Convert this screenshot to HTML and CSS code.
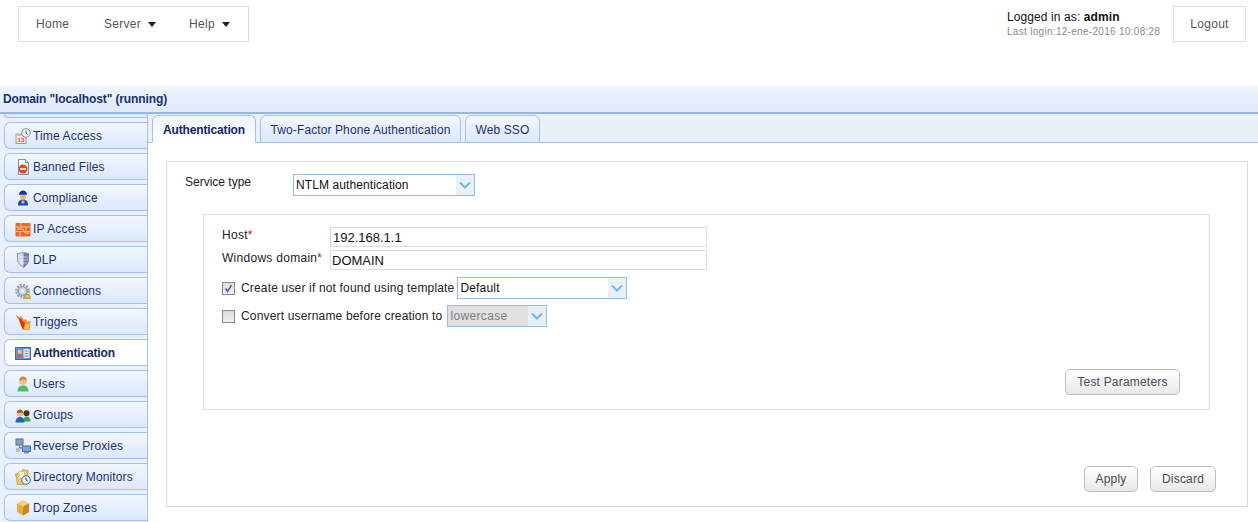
FILE: index.html
```html
<!DOCTYPE html>
<html>
<head>
<meta charset="utf-8">
<title>Domain</title>
<link rel="stylesheet" href="styles.css">
</head>
<body>
<header class="top">
  <nav class="menu">
    <a class="menu-item m-home">Home</a>
    <a class="menu-item m-server">Server<i class="caret"></i></a>
    <a class="menu-item m-help">Help<i class="caret"></i></a>
  </nav>
  <div class="session">
    <div class="who">
      <div class="logged">Logged in as: <b>admin</b></div>
      <div class="last">Last login:12-ene-2016 10:08:28</div>
    </div>
    <a class="logout">Logout</a>
  </div>
</header>
<div class="domain">Domain "localhost" (running)</div>
<div class="main">
  <aside class="side">
    <div class="side-stub"></div>
    <a class="side-item"><svg class="ico" viewBox="0 0 16 16"><rect x="1" y="6" width="10" height="9.500" fill="#f6e9e0" stroke="#a59aa6"/><rect x="1.500" y="6.500" width="9" height="1.500" fill="#d9b7a8"/><text x="2.500" y="14" font-size="6" font-family="Liberation Sans" font-weight="bold" fill="#e8502a">13</text><circle cx="11" cy="5" r="4.300" fill="#e9f0f7" stroke="#8494a8"/><path d="M11 2.800v2.500l1.700 1" fill="none" stroke="#4f627c"/></svg>Time Access</a>
    <a class="side-item"><svg class="ico" viewBox="0 0 16 16"><path d="M3.500 .5h7l3 3v12h-10z" fill="#f7f9fc" stroke="#7d8db0"/><path d="M10.500 .5v3h3" fill="#dfe6f2" stroke="#7d8db0"/><circle cx="8" cy="10" r="4.500" fill="#e8481c"/><rect x="5" y="9.200" width="6" height="1.600" fill="#fff"/></svg>Banned Files</a>
    <a class="side-item"><svg class="ico" viewBox="0 0 16 16"><path d="M3 15.500c0-4.500 2-6 5-6s5 1.500 5 6z" fill="#1b46b8"/><circle cx="8" cy="6.500" r="3" fill="#eeb47c"/><path d="M4 4.800c0-3 2.500-4.300 4-4.300s4 1.300 4 4.300z" fill="#143a9c"/><rect x="6.500" y="10.500" width="3" height="3" fill="#e9c04a"/></svg>Compliance</a>
    <a class="side-item"><svg class="ico" viewBox="0 0 16 16"><rect x=".5" y="2" width="15" height="13.500" rx="1" fill="#ee6428"/><path d="M1 6h14M1 10.500h14M6 2v4M11 6v4.500M5 10.500v5" stroke="#f9c48a" fill="none"/><path d="M2 8h6l2 4h4" stroke="#fbe08a" fill="none"/></svg>IP Access</a>
    <a class="side-item"><svg class="ico" viewBox="0 0 16 16"><path d="M2.500 1.500l6-1 5 1v6c0 4-3 6.500-5 8-2-1.500-6-4-6-8z" fill="#d3d8ec" stroke="#8a94b4"/><path d="M8.500 1v14.500c2-1.500 5-4 5-8v-6z" fill="#6f78a6"/><path d="M4 5h9M4 8h9M5 11h7" stroke="#fff" stroke-opacity=".6" fill="none"/></svg>DLP</a>
    <a class="side-item"><svg class="ico" viewBox="0 0 16 16"><circle cx="7.500" cy="8" r="5.800" fill="none" stroke="#9ea3ac" stroke-width="3" stroke-dasharray="2 1"/><circle cx="7.500" cy="8" r="4.300" fill="#d2d5da" stroke="#8b9099"/><circle cx="7.500" cy="8" r="1.800" fill="#f4f5f7"/><path d="M8.500 15.500l2.500-4h3l1.500 4z" fill="#ecc52e" stroke="#8a6d10" stroke-width=".5"/></svg>Connections</a>
    <a class="side-item"><svg class="ico" viewBox="0 0 16 16"><path d="M.5 1l4.500 3 1-2 3 4 2-1 1 3 3.500-1-1 9.500H8L5 9 4 5z" fill="#f28d1e"/><path d="M.5 1l3.500 4 1 4 3 6.500 2-6-3-3-1.500-2z" fill="#dc3018"/><path d="M10 9.500h4.300l-.8 6H9.500z" fill="#f8c43a"/></svg>Triggers</a>
    <a class="side-item active"><svg class="ico" viewBox="0 0 16 16"><rect x=".5" y="2.500" width="15" height="12" fill="#5d93d8" stroke="#3a69a8"/><rect x="8.500" y="4" width="6" height="9" fill="#e6ebf2"/><circle cx="4.800" cy="6.800" r="2.200" fill="#f0c08a"/><path d="M2 12.500c0-3 1.200-3.500 2.800-3.500s2.800 .5 2.800 3.500z" fill="#e0602a"/><path d="M9.500 6h4M9.500 8.500h4M9.500 11h4" stroke="#7d8ea5"/></svg>Authentication</a>
    <a class="side-item"><svg class="ico" viewBox="0 0 16 16"><path d="M2.500 15.500c0-4.500 2.300-6 5.500-6s5.500 1.500 5.500 6z" fill="#4fc05c"/><circle cx="8" cy="5" r="3.800" fill="#f0c08a"/><path d="M4.200 4.500c0-2.700 1.800-4 3.800-4s3.800 1.300 3.800 4c-2 0-3.800-1-4.300-1.500-.5 1-1.500 1.500-3.300 1.500z" fill="#c08c38"/></svg>Users</a>
    <a class="side-item"><svg class="ico" viewBox="0 0 16 16"><path d="M8 14.500c0-3 1.500-5 3.800-5s3.700 2 3.700 5z" fill="#3fa34b"/><circle cx="11.500" cy="6.300" r="3" fill="#4a2e18"/><path d="M.5 15.500c0-3.500 2-5.500 4.500-5.500s4.500 2 4.500 5.500z" fill="#1f62b8"/><circle cx="5" cy="6.500" r="3.200" fill="#ecbd85"/><path d="M1.800 6c0-2.200 1.700-3.500 3.200-3.500S8.200 3.800 8.200 6c-2-.2-4.400-.6-6.400 0z" fill="#a0591e"/></svg>Groups</a>
    <a class="side-item"><svg class="ico" viewBox="0 0 16 16"><rect x="1" y="1" width="7" height="6" fill="#7f9fd0" stroke="#5a6b8a"/><rect x="7.500" y="8" width="8" height="5.500" fill="#6fa5e2" stroke="#5a6b8a"/><path d="M4.500 7v3h3" stroke="#7b7f88" stroke-width="1.500" fill="none"/><rect x="1" y="10" width="4" height="4" fill="#b7bcc6"/><rect x="9" y="14" width="5" height="1.500" fill="#8b90a0"/></svg>Reverse Proxies</a>
    <a class="side-item"><svg class="ico" viewBox="0 0 16 16"><path d="M.5 5l6-2 1-2.500 5.500 1v6l-4 8H2.500z" fill="#eec964" stroke="#a9852a" stroke-width=".6"/><rect x="4" y="2.500" width="5.500" height="7" fill="#fbf6e4" stroke="#c2a75a" stroke-width=".5"/><circle cx="11" cy="11" r="4.300" fill="#e6eef6" stroke="#53687f"/><path d="M11 8.500V11l1.800 1" stroke="#33475f" fill="none"/></svg>Directory Monitors</a>
    <a class="side-item"><svg class="ico" viewBox="0 0 16 16"><path d="M8 .5l6 3v8.500l-6 3.500-6-3.500V3.500z" fill="#e2ad3e"/><path d="M8 6.500l6-3V12l-6 3.500z" fill="#c48a22"/><path d="M8 .5l-6 3 6 3 6-3z" fill="#f3cf75"/></svg>Drop Zones</a>
  </aside>
  <section class="content">
    <div class="tabs">
      <a class="tab on">Authentication</a>
      <a class="tab">Two-Factor Phone Authentication</a>
      <a class="tab">Web SSO</a>
    </div>
    <div class="panel">
      <div class="service">
        <label class="service-label">Service type</label>
        <div class="select s-type"><span class="val">NTLM authentication</span><span class="arrow"><svg viewBox="0 0 12 8" class="chev"><path d="M1 1.500l5 5 5-5" fill="none" stroke="#74b6ea" stroke-width="2"/></svg></span></div>
      </div>
      <div class="inner">
        <div class="field f-host">
          <label class="flabel">Host<em>*</em></label>
          <div class="input">192.168.1.1</div>
        </div>
        <div class="field f-domain">
          <label class="flabel">Windows domain<em>*</em></label>
          <div class="input">DOMAIN</div>
        </div>
        <div class="opt o-create">
          <span class="check"><svg viewBox="0 0 13 13" class="tick"><path d="M3 6.500l2.500 3.500L10 2.500" fill="none" stroke="#3f5aa8" stroke-width="1.800"/></svg></span>
          <span class="opt-text">Create user if not found using template</span>
          <div class="select s-tpl"><span class="val">Default</span><span class="arrow"><svg viewBox="0 0 12 8" class="chev"><path d="M1 1.500l5 5 5-5" fill="none" stroke="#74b6ea" stroke-width="2"/></svg></span></div>
        </div>
        <div class="opt o-conv">
          <span class="check"></span>
          <span class="opt-text">Convert username before creation to</span>
          <div class="select s-case"><span class="val">lowercase</span><span class="arrow"><svg viewBox="0 0 12 8" class="chev"><path d="M1 1.500l5 5 5-5" fill="none" stroke="#74b6ea" stroke-width="2"/></svg></span></div>
        </div>
        <div class="test-row"><a class="btn b-test">Test Parameters</a></div>
      </div>
      <div class="actions">
        <a class="btn b-apply">Apply</a>
        <a class="btn b-discard">Discard</a>
      </div>
    </div>
  </section>
</div>
</body>
</html>
```

FILE: styles.css
```css
* { box-sizing: border-box; }
html, body { margin: 0; height: 522px; overflow: hidden; background: #fff; }
body { font-family: "Liberation Sans", Arial, sans-serif; font-size: 12px; color: #222; letter-spacing: .1px; }

.top { height: 86px; display: flex; justify-content: space-between; align-items: flex-start; padding: 6px 12px 0 18px; }
.menu { width: 231px; height: 36px; border: 1px solid #ddd; display: flex; align-items: center; padding-left: 17px; color: #555; letter-spacing: .3px; }
.menu-item { display: flex; align-items: center; }
.m-home { width: 68px; }
.m-server { width: 85px; }
.caret { width: 0; height: 0; border-left: 4.500px solid transparent; border-right: 4.500px solid transparent; border-top: 5px solid #222; margin-left: 7px; }
.session { display: flex; align-items: flex-start; }
.who { width: 166px; padding-top: 5px; }
.logged { color: #111; line-height: 13px; }
.last { font-size: 10px; color: #8b8b8b; line-height: 12px; margin-top: 2px; letter-spacing: .3px; }
.logout { width: 73px; height: 36px; border: 1px solid #ddd; display: flex; align-items: center; justify-content: center; color: #555; letter-spacing: .3px; }

.domain { height: 28px; padding: 6px 0 0 3px; font-weight: bold; line-height: 14px; color: #16316b; background: linear-gradient(#f0f5fd, #dfe9fa); border-bottom: 2px solid #96b6e6; letter-spacing: -.12px; }

.main { display: flex; height: 408px; }
.side { width: 148px; background: #eaf1fc; flex: none; display: flex; flex-direction: column; gap: 4px; padding-left: 4px; overflow: hidden; border-right: 1px solid #a3c1ee; }
.side-stub { height: 4px; margin-right: -1px; border: 1px solid #a3c1ee; border-top: 0; border-right: 0; border-radius: 0 0 0 6px; background: #dfe9fb; flex: none; }
.side-item { flex: none; height: 27px; margin-right: -1px; display: flex; align-items: center; padding-left: 10px; color: #1c2f70; border: 1px solid #a3c1ee; border-right: 0; border-radius: 6px 0 0 6px; background: linear-gradient(#f3f7fe, #dce8fb); letter-spacing: .14px; }
.side-item.active { background: #fff; margin-right: -2px; font-weight: bold; position: relative; color: #16265e; letter-spacing: -.15px; }
.ico { width: 16px; height: 16px; margin-right: 2px; flex: none; }

.content { flex: 1; min-width: 0; }
.tabs { height: 29px; padding: 1px 0 0 4px; display: flex; gap: 4px; background: #eaf1fc; border-bottom: 1px solid #a3c1ee; }
.tab { height: 28px; border: 1px solid #a3c1ee; border-radius: 6px 6px 0 0; display: flex; align-items: center; justify-content: center; padding-top: 1px; color: #1c2f70; background: linear-gradient(#f3f7fe, #dce8fb); }
.tab:nth-child(1) { width: 104px; }
.tab:nth-child(2) { width: 201px; }
.tab:nth-child(3) { width: 75px; }
.tab.on { background: linear-gradient(#eef4fd, #fff); font-weight: bold; color: #16265e; border-bottom-color: #fff; letter-spacing: -.15px; }

.panel { margin: 18px 10px 0 18px; height: 346px; border: 1px solid #ddd; padding: 12px 37px 0 18px; position: relative; }
.service { display: flex; height: 22px; }
.service-label { width: 108px; padding-top: 1px; line-height: 14px; color: #222; letter-spacing: 0; }
.select { display: flex; border: 1px solid #92bdef; height: 22px; background: #fff; color: #111; }
.select .val { flex: 1; line-height: 20px; padding-left: 2px; }
.arrow { width: 18px; background: #e8f0fa; display: flex; align-items: center; justify-content: center; flex: none; }
.chev { width: 12px; height: 8px; }
.s-type { width: 182px; }
.s-tpl { width: 170px; margin-left: 3px; }
.s-case { width: 100px; margin-left: 5px; background: #e0e0e0; }
.s-case .val { color: #7f7f7f; letter-spacing: .35px; }
.s-case .arrow { background: #e9eff8; }

.inner { margin: 18px 0 0 18px; height: 196px; border: 1px solid #ddd; padding: 12px 19px 0 18px; }
.field { display: flex; height: 20px; margin-bottom: 3px; }
.flabel { width: 108px; line-height: 14px; color: #222; padding-top: 1px; letter-spacing: .28px; }
.flabel em { color: #e00; font-style: normal; }
.input { width: 377px; height: 20px; border: 1px solid #ddd; font-size: 13px; letter-spacing: 0; line-height: 20px; padding-left: 2px; color: #111; }
.f-domain .input { padding-left: 1px; }
.opt { display: flex; align-items: center; height: 22px; color: #222; letter-spacing: .17px; }
.o-create { margin-top: 7px; }
.o-conv { margin-top: 6px; }
.check { width: 13px; height: 13px; border: 1px solid #8a8a8a; background: linear-gradient(#ddd, #f0f0f0); margin-right: 6px; flex: none; }
.tick { display: block; width: 11px; height: 11px; }
.test-row { display: flex; justify-content: flex-end; margin: 42px 10px 0 0; }
.btn { display: flex; align-items: center; justify-content: center; height: 26px; border: 1px solid #bdbdbd; border-radius: 5px; background: linear-gradient(#fff, #e8e8e8); color: #4a4a5a; letter-spacing: .2px; }
.b-test { width: 115px; }
.actions { display: flex; justify-content: flex-end; gap: 12px; position: absolute; right: 31px; top: 304px; }
.b-apply { width: 54px; }
.b-discard { width: 66px; }
```
